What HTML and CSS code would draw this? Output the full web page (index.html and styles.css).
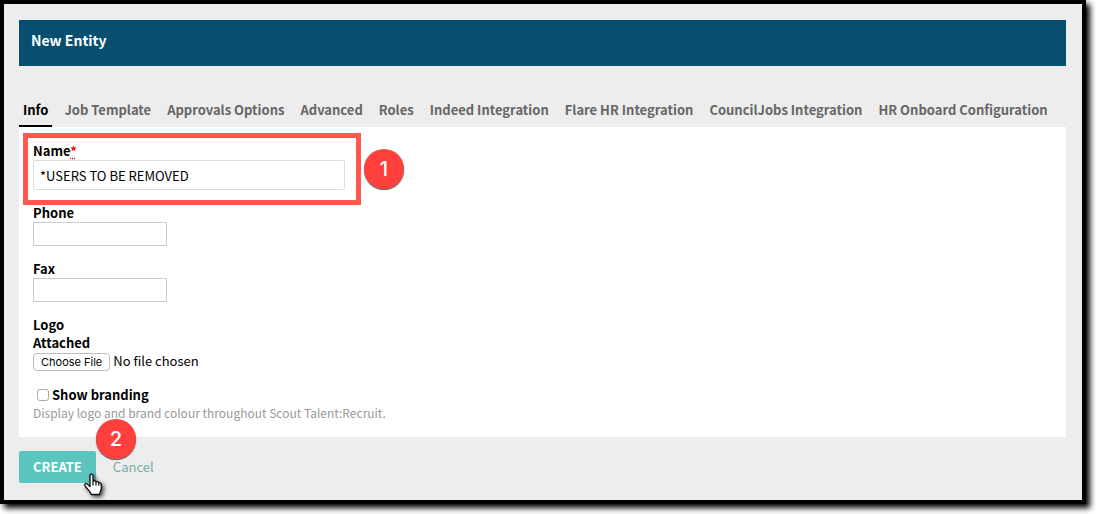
FILE: index.html
```html
<!DOCTYPE html>
<html lang="en">
<head>
<meta charset="utf-8">
<meta name="viewport" content="width=device-width, initial-scale=1">
<title>New Entity</title>
<link rel="stylesheet" href="styles.css">
</head>
<body>
<main class="frame">
  <header class="titlebar"><h1 class="title">New Entity</h1></header>
  <nav class="tabs" aria-label="Entity sections">
    <a class="tab tab-active" href="#info" aria-current="page">Info</a>
    <a class="tab" href="#job-template">Job Template</a>
    <a class="tab" href="#approvals">Approvals Options</a>
    <a class="tab" href="#advanced">Advanced</a>
    <a class="tab" href="#roles">Roles</a>
    <a class="tab" href="#indeed">Indeed Integration</a>
    <a class="tab" href="#flare">Flare HR Integration</a>
    <a class="tab" href="#counciljobs">CouncilJobs Integration</a>
    <a class="tab" href="#onboard">HR Onboard Configuration</a>
  </nav>
  <form class="form">
    <div class="panel" id="info">
      <div class="field field-name">
        <label class="label" for="name">Name<abbr class="required" title="required">*</abbr></label>
        <input class="input input-wide" id="name" type="text" value="*USERS TO BE REMOVED">
        <span class="highlight"></span>
        <span class="marker marker-one">1</span>
      </div>
      <div class="field">
        <label class="label" for="phone">Phone</label>
        <input class="input" id="phone" type="text">
      </div>
      <div class="field">
        <label class="label" for="fax">Fax</label>
        <input class="input" id="fax" type="text">
      </div>
      <div class="field">
        <span class="label">Logo</span>
        <label class="label" for="logo">Attached</label>
        <input class="file" id="logo" type="file">
      </div>
      <div class="field">
        <div class="check-row">
          <input class="check" id="branding" type="checkbox">
          <label class="label" for="branding">Show branding</label>
        </div>
        <p class="hint">Display logo and brand colour throughout Scout Talent:Recruit.</p>
      </div>
    </div>
    <div class="actions">
      <button class="create" type="submit">CREATE</button>
      <a class="cancel" href="#cancel">Cancel</a>
      <span class="marker marker-two">2</span>
      <svg class="pointer" width="24" height="28" viewBox="0 0 24 28" aria-hidden="true">
        <path d="M7 2.5C7 .6 10 .6 10 2.5V8.500C10.500 7.300 13 7.500 13 9.200C13.700 8.200 15.800 8.500 15.800 10.200C16.800 9.600 18.300 10.200 18.300 11.800V15C18.300 17 17 18.500 16.600 21.500H8.400C7.600 18.500 4 15.800 2 12.800C1 11 3 10 4.500 11.200L7 13.500Z" fill="#fff" stroke="#111" stroke-width="1.300" stroke-linejoin="round"/>
        <path d="M10 8.500V12.500M13 9.200V12.500M15.800 10.200V12.800" fill="none" stroke="#111" stroke-width="1.200"/>
      </svg>
    </div>
  </form>
</main>
</body>
</html>
```
FILE: styles.css
```css
* { box-sizing: border-box; }
body {
  margin: 0;
  padding: 0 10px 10px 0;
  background: #fff;
  color: #000;
  font-family: "Noto Sans CJK SC", "Noto Sans", sans-serif;
  font-size: 13px;
  line-height: 18px;
}
.frame {
  border: 4px solid #000;
  background: #ededed;
  padding: 16px 16px 17px 15px;
  box-shadow: 4px 4px 6px #000;
}
.titlebar { background: #084e6e; padding: 11px 12px 17px; }
.title { margin: 0; color: #fff; font-size: 14px; line-height: 18px; font-weight: 700; }
.tabs { display: flex; gap: 8px; margin-top: 34px; }
.tab {
  padding: 1px 4px 6px;
  border-bottom: 2px solid transparent;
  color: #666;
  font-weight: 700;
  text-decoration: none;
  white-space: nowrap;
}
.tab-active { color: #000; border-color: #000; }
.panel {
  display: flex;
  flex-direction: column;
  gap: 14px;
  padding: 15px 14px;
  background: #fff;
}
.field { display: flex; flex-direction: column; align-items: flex-start; }
.field-name { position: relative; }
.label { font-weight: 700; }
.required { color: #f00; text-decoration: underline dotted #c00; text-underline-offset: 2px; }
.input {
  width: 134px;
  height: 24px;
  border: 1px solid #ccc;
  padding: 0 6px;
  background: #fff;
  color: #000;
  font: inherit;
}
.input-wide { width: 312px; max-width: 100%; height: 30px; border-color: #ddd; border-radius: 2px; }
.highlight {
  position: absolute;
  left: -10px;
  top: -9px;
  width: 338px;
  height: 72px;
  border: 5px solid #ff594d;
  pointer-events: none;
}
.marker {
  position: absolute;
  width: 40px;
  height: 40px;
  border-radius: 50%;
  background: #ff403c;
  box-shadow: 0 1px 1px #555;
  color: #fff;
  font: 500 20px/40px Inter, "Liberation Sans", sans-serif;
  text-align: center;
}
.marker-one { left: 331px; top: 7px; }
.marker-two { left: 77px; top: -32px; }
.file { font: inherit; height: 20px; }
.file::file-selector-button {
  height: 18px;
  margin: 0 3px 0 0;
  padding: 0 7px;
  border: 1px solid #bbb;
  border-radius: 4px;
  background: #fff;
  color: #000;
  font: 11px/14px Inter, sans-serif;
}
.check-row { display: flex; align-items: center; gap: 3px; padding-left: 4px; }
.check {
  appearance: none;
  width: 12px;
  height: 12px;
  margin: 0;
  border: 1px solid #aaa;
  border-radius: 3px;
  background: #fff;
}
.check:checked { background: #5bc4be; }
.hint { margin: 0; color: #999; font-size: 12px; line-height: 18px; }
.actions { position: relative; display: flex; align-items: center; gap: 17px; margin-top: 14px; }
.create {
  height: 32px;
  padding: 0 14px;
  border: 0;
  border-radius: 2px;
  background: #5bc4be;
  color: #fff;
  font: inherit;
  font-weight: 700;
}
.cancel { color: #7aaba5; text-decoration: none; }
.pointer {
  position: absolute;
  left: 64px;
  top: 22px;
  overflow: visible;
  filter: drop-shadow(2px 2px 2px #444);
}
```
